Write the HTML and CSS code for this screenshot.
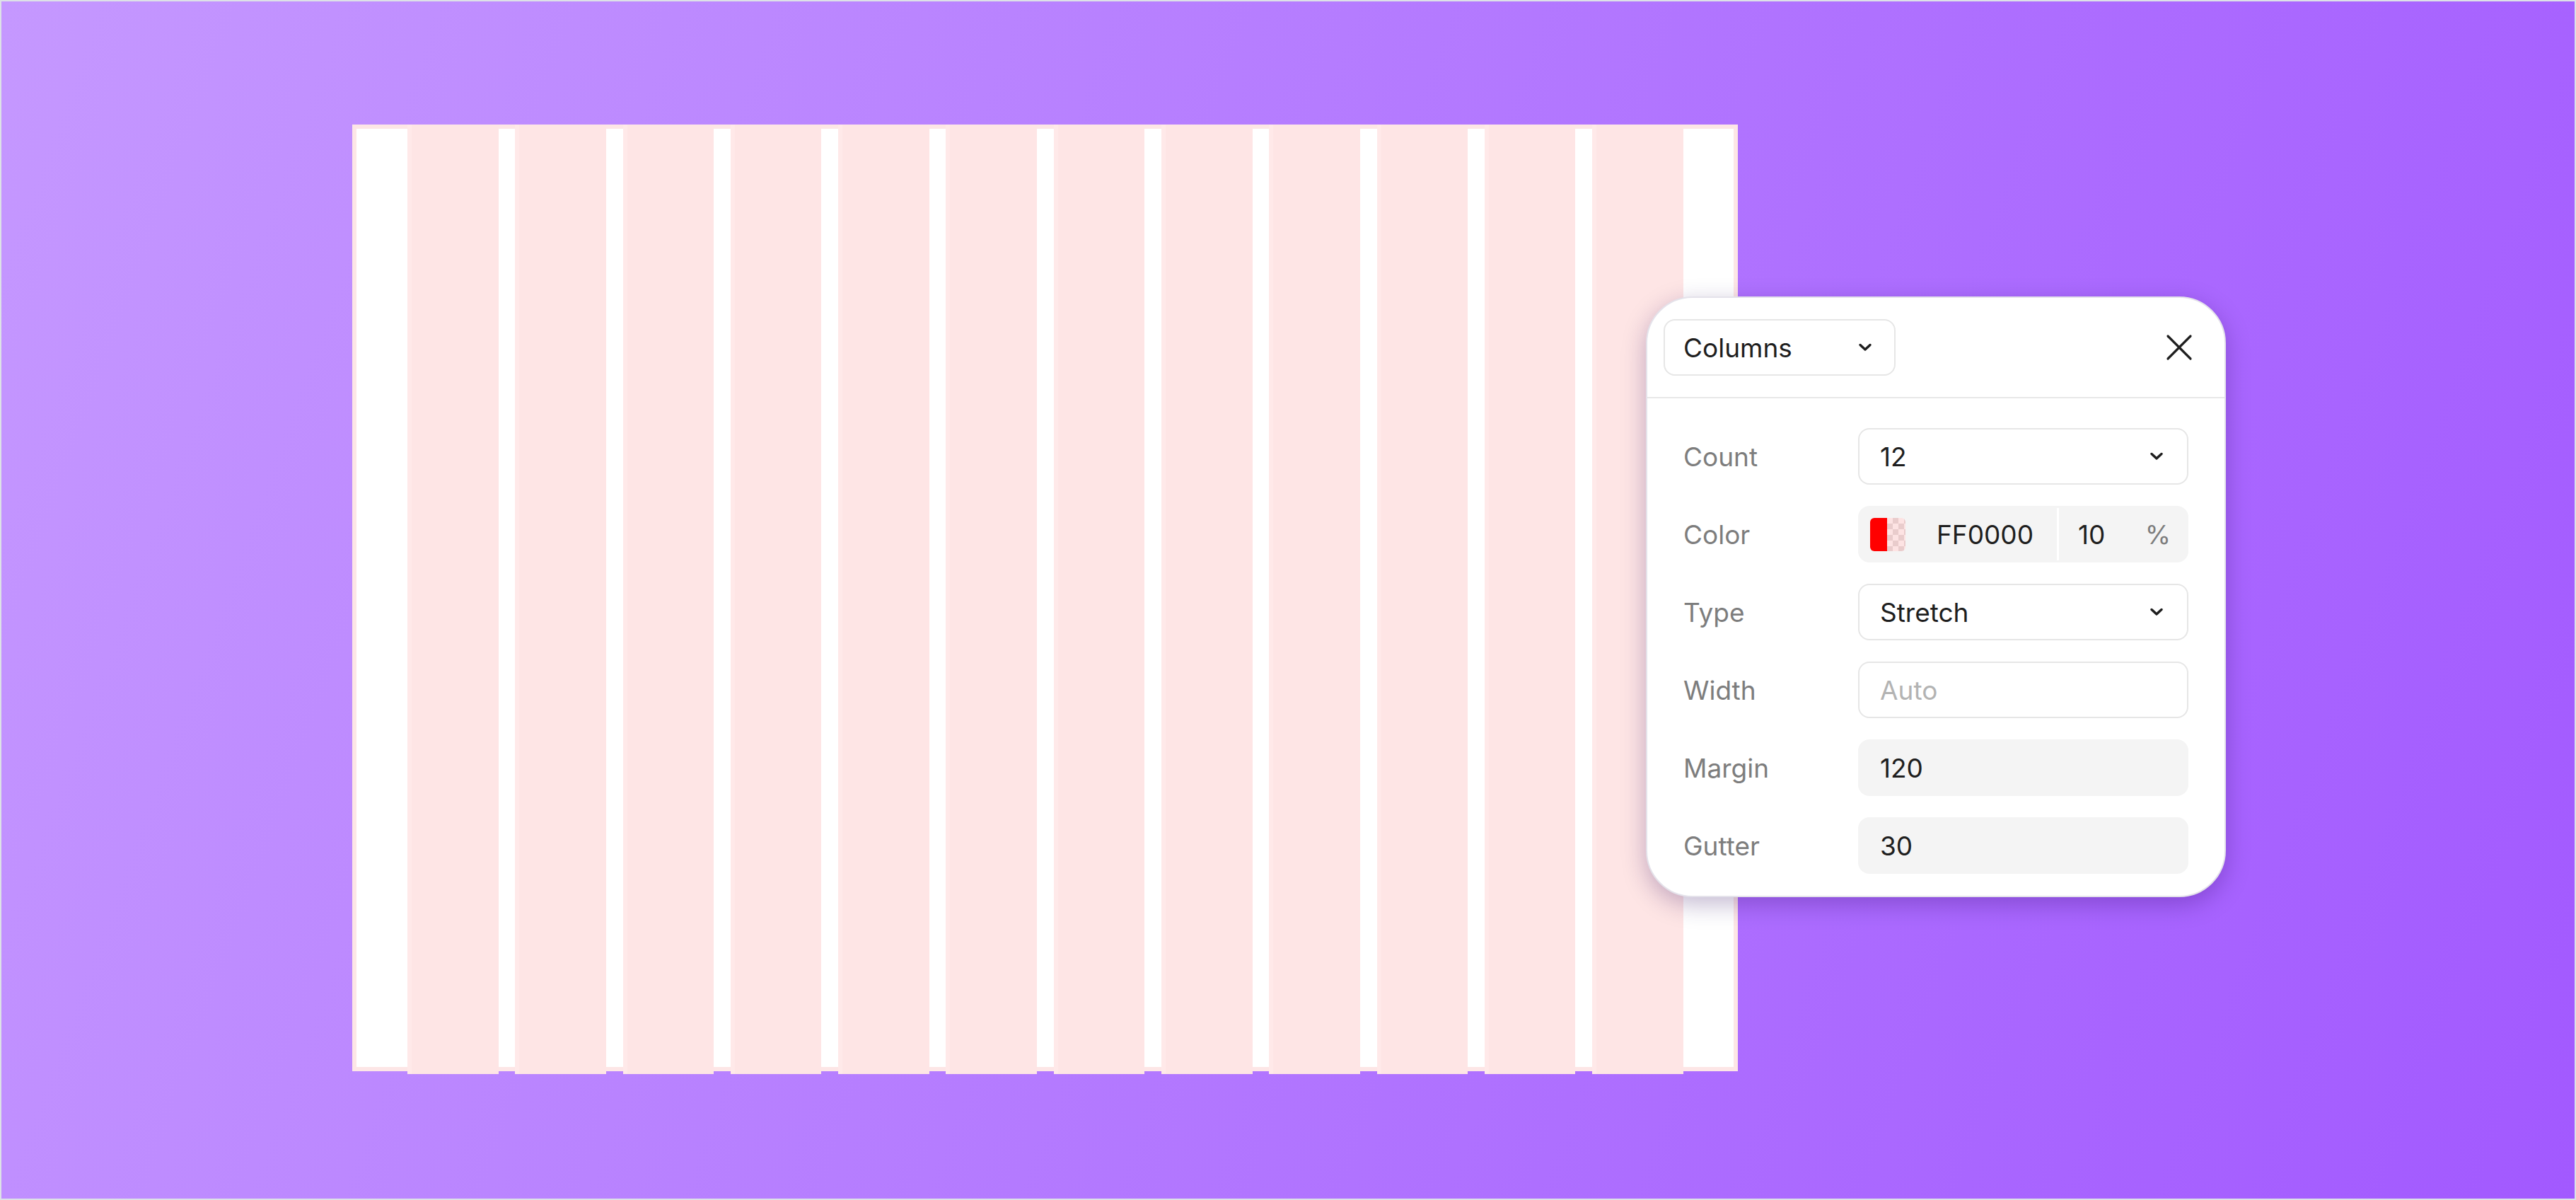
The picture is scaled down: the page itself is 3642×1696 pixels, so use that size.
FILE: index.html
```html
<!DOCTYPE html>
<html lang="en">
<head>
<meta charset="utf-8">
<title>Layout grid – Columns</title>
<link rel="stylesheet" href="styles.css">
</head>
<body>
<div class="canvas">
  <div class="artboard">
    <div class="grid">
      <div class="col"></div><div class="col"></div><div class="col"></div><div class="col"></div>
      <div class="col"></div><div class="col"></div><div class="col"></div><div class="col"></div>
      <div class="col"></div><div class="col"></div><div class="col"></div><div class="col"></div>
    </div>
  </div>

  <div class="panel">
    <div class="panel-head">
      <div class="select select-type">
        <span>Columns</span>
        <svg class="chev" viewBox="0 0 20 12"><polyline points="3,2.5 10,9 17,2.5"/></svg>
      </div>
      <svg class="close" viewBox="0 0 38 38"><line x1="3" y1="3" x2="35" y2="35"/><line x1="35" y1="3" x2="3" y2="35"/></svg>
    </div>
    <div class="panel-body">
      <div class="label">Count</div>
      <div class="field select">
        <span>12</span>
        <svg class="chev" viewBox="0 0 20 12"><polyline points="3,2.5 10,9 17,2.5"/></svg>
      </div>

      <div class="label">Color</div>
      <div class="field filled color-field">
        <div class="swatch"><div class="swatch-solid"></div><div class="swatch-alpha"></div></div>
        <span class="hex">FF0000</span>
        <div class="vdiv"></div>
        <span class="alpha">10</span>
        <span class="pct">%</span>
      </div>

      <div class="label">Type</div>
      <div class="field select">
        <span>Stretch</span>
        <svg class="chev" viewBox="0 0 20 12"><polyline points="3,2.5 10,9 17,2.5"/></svg>
      </div>

      <div class="label">Width</div>
      <div class="field outlined"><span class="placeholder">Auto</span></div>

      <div class="label">Margin</div>
      <div class="field filled"><span>120</span></div>

      <div class="label">Gutter</div>
      <div class="field filled"><span>30</span></div>
    </div>
  </div>
</div>
</body>
</html>
```

FILE: styles.css
```css
* { box-sizing: border-box; }

html, body {
  margin: 0;
  padding: 0;
}

body {
  width: 3642px;
  height: 1696px;
  overflow: hidden;
  font-family: "Inter", "Noto Sans", "Liberation Sans", sans-serif;
}

.canvas {
  position: relative;
  width: 3642px;
  height: 1696px;
  border: 2px solid #dde1e7;
  background: linear-gradient(110deg, #c598ff 0%, #b57cff 45%, #a259ff 100%);
  padding: 174px 0 0 496px;
}

/* ---------- artboard with column grid ---------- */
.artboard {
  width: 1959px;
  height: 1338px;
  background: #ffffff;
  border: 6px solid #fde6e6;
}

.grid {
  display: flex;
  gap: 23.8px;
  height: 1342px;
  margin-top: -6px;
  padding-left: 72px;
}

.col {
  width: 128.5px;
  flex: none;
  background: #fee5e5;
  border-left: 6px solid #ffe9e9;
}

/* ---------- settings panel ---------- */
.panel {
  position: absolute;
  left: 2325px;
  top: 417px;
  width: 820px;
  height: 849px;
  background: #ffffff;
  border: 2px solid #e4e2ea;
  border-radius: 66px;
  box-shadow: 0 10px 34px rgba(40, 0, 90, 0.28);
  overflow: hidden;
}

.panel-head {
  height: 142px;
  border-bottom: 2px solid #e8e8e8;
  display: flex;
  align-items: center;
  justify-content: space-between;
  padding: 0 45px 0 23px;
}

.select {
  display: flex;
  align-items: center;
  justify-content: space-between;
}

.select-type {
  width: 328px;
  height: 80px;
  border: 2px solid #e6e6e6;
  border-radius: 16px;
  padding: 0 31px 0 26px;
  font-size: 37px;
  color: #1e1e1e;
}

.chev {
  width: 20px;
  height: 12px;
  flex: none;
}

.chev polyline {
  fill: none;
  stroke: #1e1e1e;
  stroke-width: 3.4;
  stroke-linecap: round;
  stroke-linejoin: round;
}

.close {
  width: 38px;
  height: 38px;
  flex: none;
}

.close line {
  stroke: #1e1e1e;
  stroke-width: 3.2;
  stroke-linecap: round;
}

.panel-body {
  display: grid;
  grid-template-columns: 247px 1fr;
  grid-auto-rows: 80px;
  row-gap: 30px;
  padding: 42px 51px 0 51px;
  align-items: center;
}

.label {
  font-size: 37px;
  color: #7d7d7d;
}

.field {
  height: 80px;
  border-radius: 16px;
  font-size: 37px;
  color: #1e1e1e;
  display: flex;
  align-items: center;
  padding: 0 33px 0 29px;
}

.field.select {
  border: 2px solid #e6e6e6;
}

.outlined {
  border: 2px solid #e6e6e6;
}

.filled {
  background: #f4f4f4;
  padding-left: 31px;
}

.placeholder {
  color: #b3b3b3;
}

/* color row */
.color-field {
  padding: 0 25px 0 17px;
}

.swatch {
  width: 50px;
  height: 47px;
  border-radius: 6px;
  overflow: hidden;
  display: flex;
  flex: none;
}

.swatch-solid {
  width: 24px;
  background: #ff0000;
}

.swatch-alpha {
  flex: 1;
  background-color: #fde3e3;
  background-image:
    linear-gradient(45deg, #e9cccc 25%, transparent 25%, transparent 75%, #e9cccc 75%),
    linear-gradient(45deg, #e9cccc 25%, transparent 25%, transparent 75%, #e9cccc 75%);
  background-size: 16px 16px;
  background-position: 0 0, 8px 8px;
}

.hex {
  margin-left: 44px;
  width: 170px;
}

.vdiv {
  width: 3px;
  align-self: stretch;
  margin: 3px 0;
  background: #ffffff;
}

.alpha {
  margin-left: 27px;
  flex: 1;
}

.pct {
  color: #7d7d7d;
}
```
